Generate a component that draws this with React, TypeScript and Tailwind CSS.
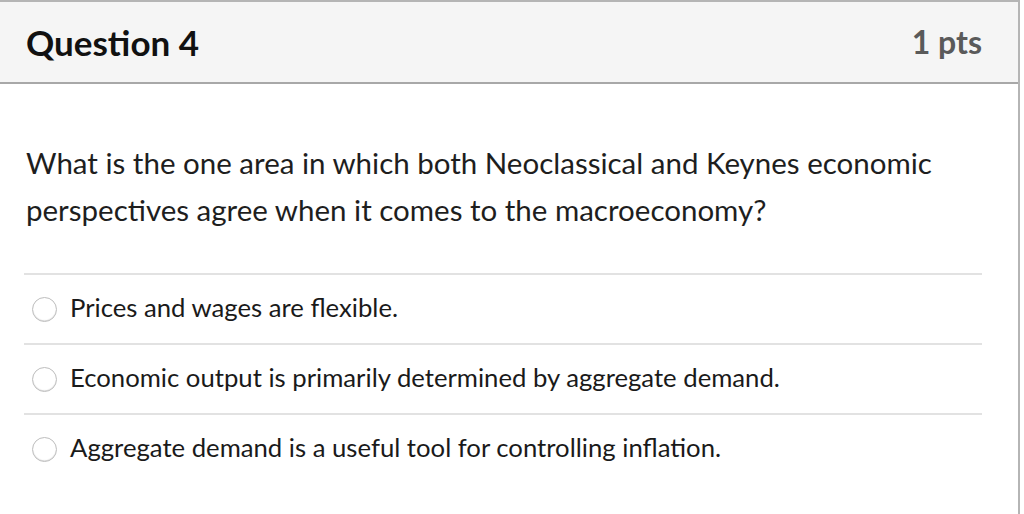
import React from "react";

const answers = [
  "Prices and wages are flexible.",
  "Economic output is primarily determined by aggregate demand.",
  "Aggregate demand is a useful tool for controlling inflation.",
];

export default function App() {
  return (
    <div
      className="w-[1024px] h-[514px] bg-white overflow-hidden"
      style={{ fontFamily: "Lato, 'Noto Sans', sans-serif" }}
    >
      <div className="w-[1020px] h-[514px] border-t-2 border-r-2 border-[#b5b5b5]">
        <div className="h-[82px] bg-[#f5f5f5] border-b-2 border-[#a8a8a8] flex items-center justify-between pl-[26px] pr-[36px]">
          <div className="text-[35px] font-bold text-[#111] leading-none">Question 4</div>
          <div className="text-[32px] font-bold text-[#5a5a5a] leading-none">1 pts</div>
        </div>
        <div className="px-[26px] pt-[55px]">
          <p className="text-[29.5px] leading-[47px] text-[#1e1e1e] w-[960px]">
            What is the one area in which both Neoclassical and Keynes economic perspectives agree when it comes to the macroeconomy?
          </p>
        </div>
        <div className="ml-[24px] w-[958px] mt-[40px]">
          {answers.map((a) => (
            <div key={a} className="h-[70px] border-t-2 border-[#e2e2e2] flex items-center">
              <div className="ml-[8px] w-[25px] h-[25px] rounded-full border border-[#bdbdbd] bg-white shadow-[inset_0_-1px_1px_rgba(0,0,0,0.12)] shrink-0" />
              <div className="ml-[13px] text-[25.7px] leading-none text-[#1a1a1a] -mt-[2px]">{a}</div>
            </div>
          ))}
        </div>
      </div>
    </div>
  );
}
